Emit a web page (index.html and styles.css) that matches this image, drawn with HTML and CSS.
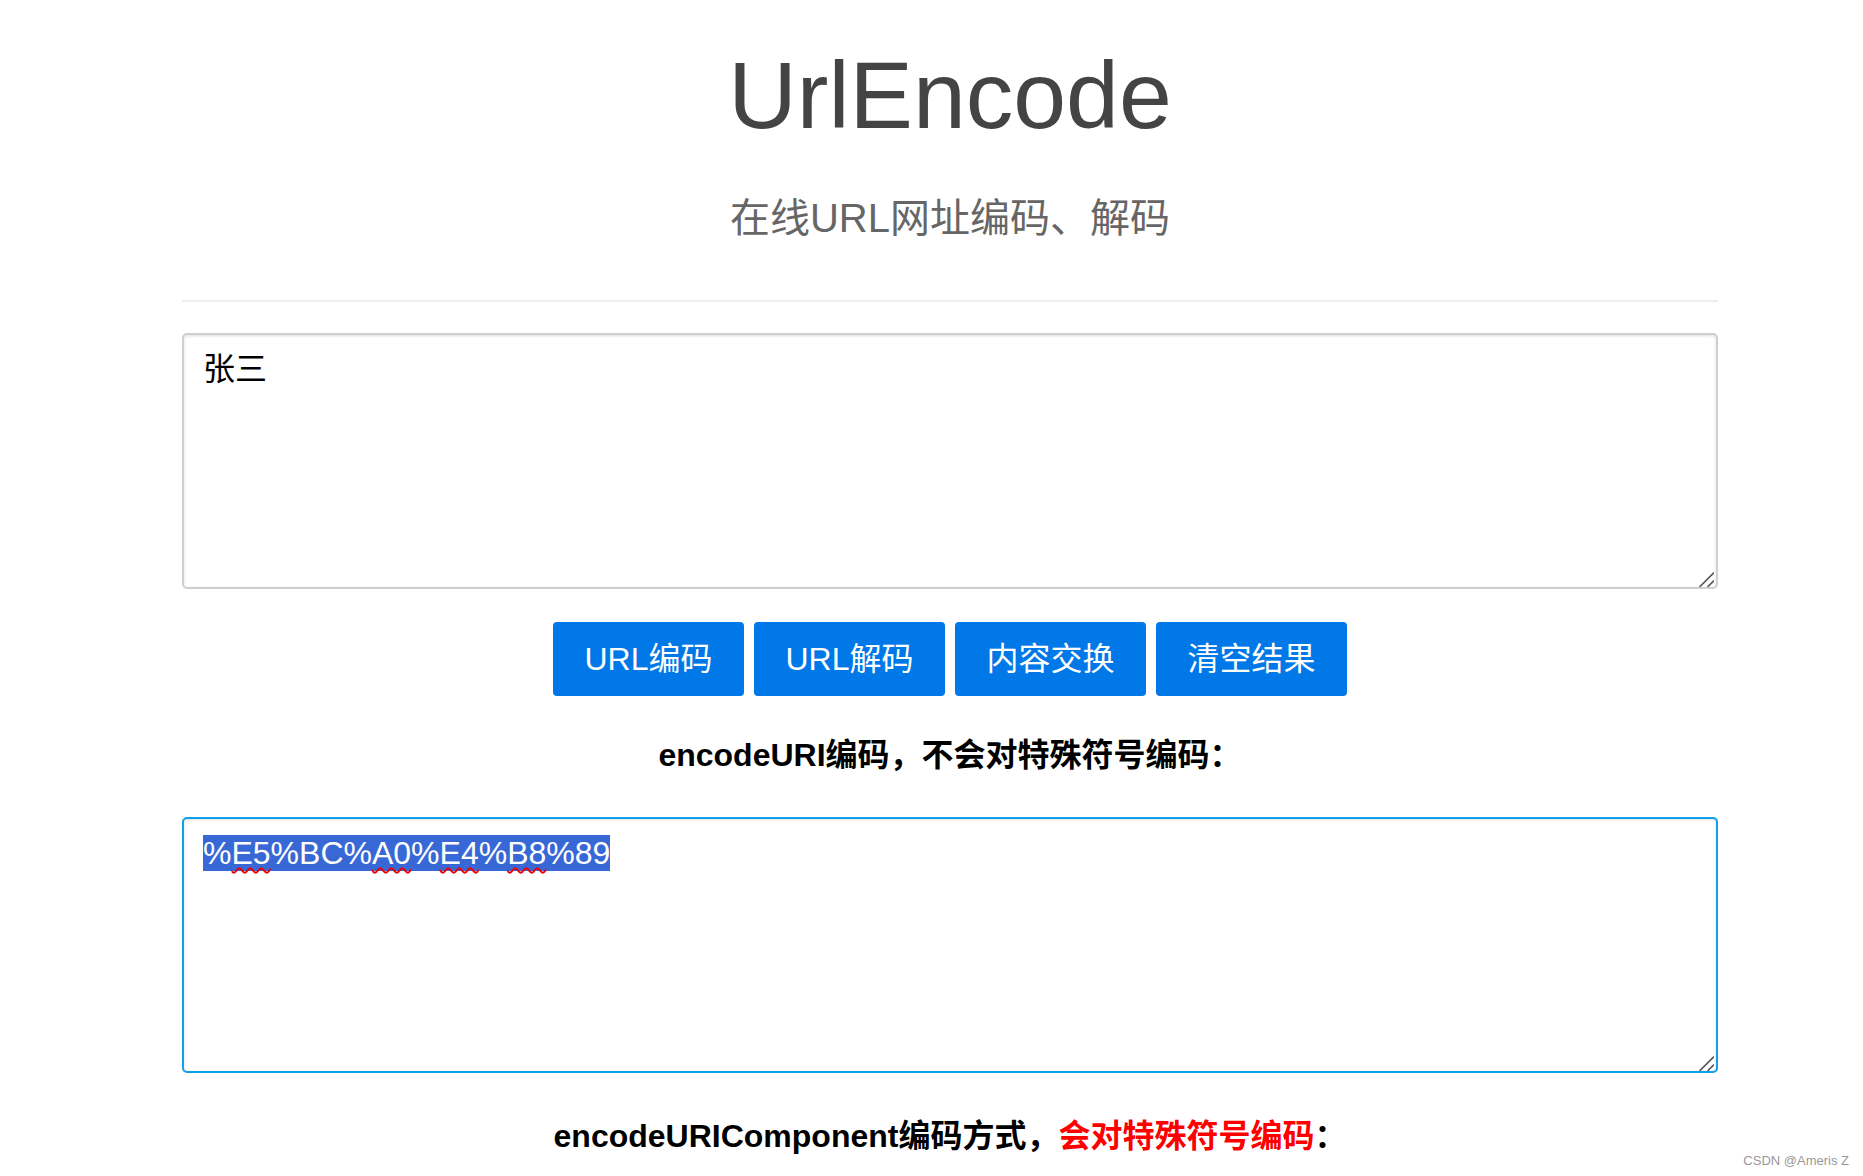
FILE: index.html
```html
<!DOCTYPE html>
<html lang="zh-CN">
<head>
<meta charset="utf-8">
<title>UrlEncode</title>
<link rel="stylesheet" href="styles.css">
</head>
<body>
<main class="page">
  <header class="masthead">
    <h1 class="title">UrlEncode</h1>
    <p class="subtitle">在线URL网址编码、解码</p>
  </header>
  <hr class="rule">
  <div class="box">
    <textarea class="field" spellcheck="false">张三</textarea>
    <svg class="grip" viewBox="0 0 16 16" width="16" height="16" aria-hidden="true"><path d="M2 15.5 L15.5 2 M10 15.5 L15.5 10" stroke="#555" stroke-width="1.6" fill="none" stroke-linecap="round"/></svg>
  </div>
  <div class="actions">
    <button class="btn">URL编码</button>
    <button class="btn">URL解码</button>
    <button class="btn">内容交换</button>
    <button class="btn">清空结果</button>
  </div>
  <h3 class="label">encodeURI编码，不会对特殊符号编码：</h3>
  <div class="box box-out">
    <div class="field field-focus"><span class="sel">%<span class="typo">E5</span>%BC%<span class="typo">A0</span>%<span class="typo">E4</span>%<span class="typo">B8</span>%89</span></div>
    <svg class="grip" viewBox="0 0 16 16" width="16" height="16" aria-hidden="true"><path d="M2 15.5 L15.5 2 M10 15.5 L15.5 10" stroke="#555" stroke-width="1.6" fill="none" stroke-linecap="round"/></svg>
  </div>
  <h3 class="label label-lg">encodeURIComponent编码方式，<span class="warn">会对特殊符号编码</span>：</h3>
</main>
<div class="watermark">CSDN @Ameris Z</div>
</body>
</html>
```

FILE: styles.css
```css
html, body {
  margin: 0;
  padding: 0;
  background: #fff;
}

body {
  font-family: "Liberation Sans", "Noto Sans CJK SC", sans-serif;
  height: 1176px;
  overflow: hidden;
  position: relative;
}

.page {
  padding: 0 145px 0 182px;
  display: flex;
  flex-direction: column;
}

.masthead {
  text-align: center;
}

.title {
  margin: 38px 0 0;
  font-size: 95px;
  line-height: 114px;
  font-weight: normal;
  color: #444;
}

.subtitle {
  margin: 38px 0 0;
  font-size: 40px;
  line-height: 56px;
  color: #666;
}

.rule {
  margin: 54px 0 0;
  border: 0;
  border-top: 2px solid #eee;
  height: 0;
}

.box {
  position: relative;
  margin-top: 31px;
}

.box-out {
  margin-top: 42px;
}

.field {
  box-sizing: border-box;
  display: block;
  width: 100%;
  height: 256px;
  margin: 0;
  padding: 16px 19px;
  border: 2px solid #cfcfcf;
  border-radius: 5px;
  box-shadow: inset 0 1px 3px #ddd;
  font-family: "Liberation Sans", "Noto Sans CJK SC", sans-serif;
  font-size: 32px;
  line-height: 37px;
  color: #000;
  background: #fff;
  resize: none;
  overflow: hidden;
  outline: none;
}

.field-focus {
  border-color: #129fea;
}

.grip {
  position: absolute;
  right: 4px;
  bottom: 2px;
  pointer-events: none;
}

.sel {
  background: #3867d6;
  color: #fff;
}

.typo {
  text-decoration: underline wavy #e00;
  text-decoration-skip-ink: none;
  text-underline-offset: 3px;
  text-decoration-thickness: 1.5px;
}

.actions {
  display: flex;
  justify-content: center;
  gap: 10px;
  margin-top: 33px;
}

.btn {
  box-sizing: border-box;
  height: 74px;
  padding: 16px 31.5px;
  border: 0;
  border-radius: 4px;
  background: #0078e7;
  color: #fff;
  font-family: "Liberation Sans", "Noto Sans CJK SC", sans-serif;
  font-size: 32px;
  line-height: 42px;
}

.label {
  margin: 39px 0 0;
  text-align: center;
  font-size: 32px;
  line-height: 40px;
  font-weight: bold;
  color: #000;
}

.label-lg {
  margin-top: 41px;
  line-height: 44px;
}

.warn {
  color: #f00;
}

.watermark {
  position: absolute;
  right: 14px;
  bottom: 8px;
  font-size: 13px;
  color: #999;
}
```
